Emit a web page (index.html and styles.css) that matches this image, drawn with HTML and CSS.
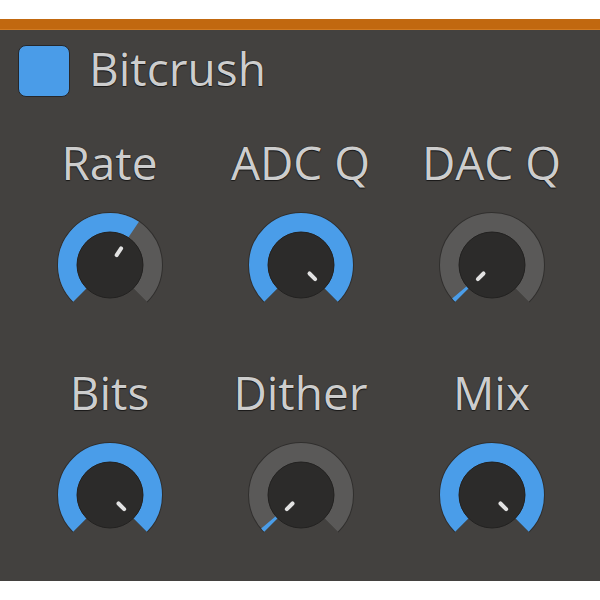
FILE: index.html
```html
<!DOCTYPE html>
<html>
<head>
<meta charset="utf-8">
<link rel="stylesheet" href="styles.css">
</head>
<body>
<div class="device">
  <div class="accent"></div>
  <div class="panel">
    <div class="header">
      <div class="toggle"></div>
      <div class="title">Bitcrush</div>
    </div>
    <div class="knobs">
      <div class="knob">
        <div class="label">Rate</div>
        <svg class="dial" viewBox="-55 -55 110 110" width="110" height="110">
          <path class="shadow" d="M -30.05 30.05 A 42.5 42.5 0 1 1 30.05 30.05"/>
          <path class="track" d="M -30.05 30.05 A 42.5 42.5 0 1 1 30.05 30.05"/>
          <path class="value" d="M -30.05 30.05 A 42.5 42.5 0 0 1 23.61 -35.34"/>
          <circle class="cap" r="33"/>
          <line class="pointer" x1="6.67" y1="-9.98" x2="11.11" y2="-16.63"/>
        </svg>
      </div>
      <div class="knob">
        <div class="label">ADC Q</div>
        <svg class="dial" viewBox="-55 -55 110 110" width="110" height="110">
          <path class="shadow" d="M -30.05 30.05 A 42.5 42.5 0 1 1 30.05 30.05"/>
          <path class="value" d="M -30.05 30.05 A 42.5 42.5 0 1 1 30.05 30.05"/>
          <circle class="cap" r="33"/>
          <line class="pointer" x1="8.49" y1="8.49" x2="14.14" y2="14.14"/>
        </svg>
      </div>
      <div class="knob">
        <div class="label">DAC Q</div>
        <svg class="dial" viewBox="-55 -55 110 110" width="110" height="110">
          <path class="shadow" d="M -30.05 30.05 A 42.5 42.5 0 1 1 30.05 30.05"/>
          <path class="track" d="M -30.05 30.05 A 42.5 42.5 0 1 1 30.05 30.05"/>
          <path class="value" d="M -30.05 30.05 A 42.5 42.5 0 0 1 -32.56 27.32"/>
          <circle class="cap" r="33"/>
          <line class="pointer" x1="-8.49" y1="8.49" x2="-14.14" y2="14.14"/>
        </svg>
      </div>
      <div class="knob">
        <div class="label">Bits</div>
        <svg class="dial" viewBox="-55 -55 110 110" width="110" height="110">
          <path class="shadow" d="M -30.05 30.05 A 42.5 42.5 0 1 1 30.05 30.05"/>
          <path class="value" d="M -30.05 30.05 A 42.5 42.5 0 1 1 30.05 30.05"/>
          <circle class="cap" r="33"/>
          <line class="pointer" x1="8.49" y1="8.49" x2="14.14" y2="14.14"/>
        </svg>
      </div>
      <div class="knob">
        <div class="label">Dither</div>
        <svg class="dial" viewBox="-55 -55 110 110" width="110" height="110">
          <path class="shadow" d="M -30.05 30.05 A 42.5 42.5 0 1 1 30.05 30.05"/>
          <path class="track" d="M -30.05 30.05 A 42.5 42.5 0 1 1 30.05 30.05"/>
          <path class="value" d="M -30.05 30.05 A 42.5 42.5 0 0 1 -32.56 27.32"/>
          <circle class="cap" r="33"/>
          <line class="pointer" x1="-8.49" y1="8.49" x2="-14.14" y2="14.14"/>
        </svg>
      </div>
      <div class="knob">
        <div class="label">Mix</div>
        <svg class="dial" viewBox="-55 -55 110 110" width="110" height="110">
          <path class="shadow" d="M -30.05 30.05 A 42.5 42.5 0 1 1 30.05 30.05"/>
          <path class="value" d="M -30.05 30.05 A 42.5 42.5 0 1 1 30.05 30.05"/>
          <circle class="cap" r="33"/>
          <line class="pointer" x1="8.49" y1="8.49" x2="14.14" y2="14.14"/>
        </svg>
      </div>
    </div>
  </div>
</div>
</body>
</html>
```
FILE: styles.css
```css
html, body {
  margin: 0;
  padding: 0;
  background: #ffffff;
}
body {
  font-family: "Open Sans", "Noto Sans", sans-serif;
}
.device {
  margin-top: 19px;
  width: 600px;
}
.accent {
  height: 10px;
  background: #c1680f;
  border-bottom: 1px solid #d07a22;
}
.panel {
  height: 551px;
  background: #43413f;
  box-sizing: border-box;
  padding-top: 15px;
}
.header {
  display: flex;
  align-items: flex-start;
  padding-left: 18px;
  gap: 19px;
}
.toggle {
  width: 50px;
  height: 50px;
  border: 1px solid #26272a;
  border-radius: 8px;
  background: #4a9ce8;
}
.title, .label {
  font-size: 46px;
  line-height: 46px;
  color: #cdcdcd;
  text-shadow: 0 0 1px rgba(0,0,0,0.9), 0 1px 1px rgba(0,0,0,0.6);
  white-space: nowrap;
}
.knobs {
  display: grid;
  grid-template-columns: repeat(3, 191px);
  row-gap: 49px;
  padding-left: 14px;
  margin-top: 42px;
}
.knob {
  display: flex;
  flex-direction: column;
  align-items: center;
  gap: 25px;
}
.dial {
  display: block;
  overflow: visible;
}
.shadow {
  fill: none;
  stroke: rgba(0,0,0,0.28);
  stroke-width: 21;
}
.track {
  fill: none;
  stroke: #5a5958;
  stroke-width: 19;
}
.value {
  fill: none;
  stroke: #4a9de9;
  stroke-width: 19;
}
.cap {
  fill: #2c2b2a;
  stroke: #232221;
  stroke-width: 1;
}
.pointer {
  stroke: #e2e2e2;
  stroke-width: 4;
  stroke-linecap: round;
}
```
